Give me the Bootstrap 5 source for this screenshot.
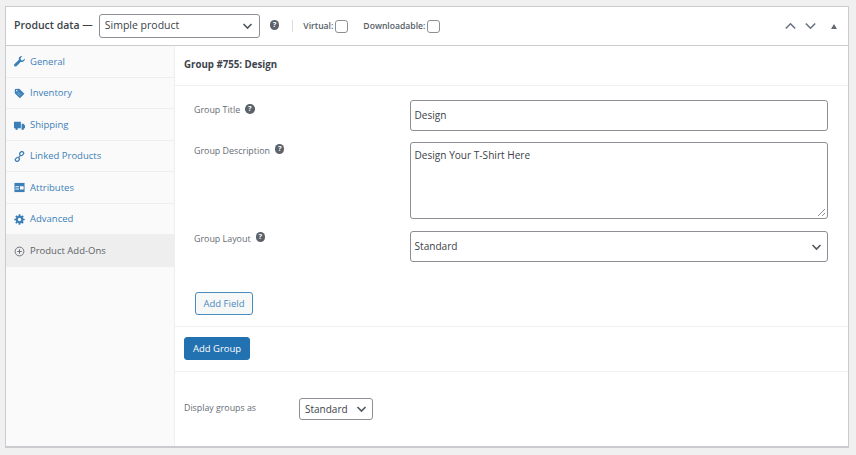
<!DOCTYPE html>
<html lang="en"><head><meta charset="utf-8"><title>Product data</title>
<link href="https://cdn.jsdelivr.net/npm/bootstrap@5.3.0/dist/css/bootstrap.min.css" rel="stylesheet">
<style>
html,body{height:100%}
body{background:#f0f0f1;font-family:"Open Sans","Noto Sans",sans-serif;font-size:10px;color:#555d66;overflow:hidden;padding:6px 7px 0 5px}
.pd-panel{background:#fff;border:1px solid #c9cbcf;border-bottom-width:2px;height:442px;display:flex;flex-direction:column}
.pd-head{height:39px;border-bottom:1px solid #c9cbcf;padding:0 11px 0 8px;flex:none}
.pd-title{font-weight:600;font-size:10.5px;color:#3c434a;white-space:nowrap}
.pd-select{border:1px solid #8c8f94;border-radius:3px;background:#fff;color:#3c434a;font-size:10.5px;position:relative;display:flex;align-items:center}
.pd-select svg{position:absolute;right:6px;top:50%;margin-top:-4px}
.sel-type{width:161px;height:24px;padding-left:5px;margin-left:6px}
.pd-help{width:9.5px;height:9.5px;flex:none;border-radius:50%;background:#5c6269;color:#fff;font-size:7.5px;font-weight:700;line-height:9.5px;text-align:center;display:inline-block}
.help-top{margin:-2px 13px 0 10px}
.pd-sep{width:1px;height:12px;background:#dcdcde;margin-right:10px}
.pd-check{width:13px;height:13px;border:1px solid #8c8f94;border-radius:3px;background:#fff;margin-left:2px;flex:none}
.pd-lbl{font-size:8.6px;font-weight:600;color:#555d66;white-space:nowrap}
.pd-lbl-2{margin-left:15px}
.pd-ctrls{gap:9px}
.pd-tri{margin-left:6px}
.pd-body{flex:1;min-height:0}
.pd-side{width:169px;background:#fafafa;border-right:1px solid #eee;flex:none}
.pd-tab{height:31.45px;border-bottom:1px solid #eee;padding:1px 0 0 8px;color:#3a7fb8;font-size:9.5px;gap:5px}
.pd-tab:first-child{height:31.9px}
.pd-tab svg{width:11px;height:11px;flex:none}
.pd-tab.is-on{background:#eee;color:#5c6269;border-bottom:0}
.pd-main{flex:1;min-width:0}
.pd-gtitle{height:40px;border-bottom:1px solid #f0f0f0;padding-left:9px;font-weight:700;font-size:9.7px;color:#3c434a}
.pd-form{padding:14px 20px 11px 19px;height:241px;border-bottom:1px solid #f0f0f0}
.pd-row{display:flex}
.pd-row-a{margin-bottom:11px}
.pd-row-b{margin-bottom:12px}
.pd-label{width:216px;flex:none;font-size:8.9px;color:#666c73;gap:5px;display:flex;align-items:flex-start;line-height:13px;padding-top:2px}
.pd-row-a .pd-label{padding-top:3px}
.pd-row-a .pd-help{margin-top:1px}
.pd-row-b .pd-label{padding-top:2px}
.pd-row-c .pd-label{padding-top:1px}
.pd-input{flex:1;height:31px;border:1px solid #8c8f94;border-radius:3px;padding:1px 3.5px 0;font-size:10.1px;color:#3c434a;display:flex;align-items:center;position:relative;background:#fff}
.pd-row-c .pd-input{padding-top:0}
.pd-area{flex:1;height:77px;border:1px solid #8c8f94;border-radius:3px;padding:5px 3.5px;font-size:10.1px;color:#3c434a;position:relative;line-height:15px}
.pd-grip{position:absolute;right:1px;bottom:1px}
.pd-input svg.chev{position:absolute;right:5px;top:50%;margin-top:-4px}
.btn-field{width:58px;height:23px;padding:0;border:1px solid #4a8bc0;border-radius:3px;background:#f6f7f7;color:#4a8bc0;font-size:9.5px;line-height:21px;margin:30px 0 0 1px;display:block}
.pd-addbar{height:45px;border-bottom:1px solid #f0f0f0;padding:0 0 2px 9px}
.btn-group-add{width:66px;height:23px;padding:0;border:1px solid #2271b1;border-radius:3px;background:#2271b1;color:#fff;font-size:9.5px;line-height:21px}
.pd-disp{padding:26px 0 0 9px;font-size:8.8px;color:#666c73}
.sel-std{width:74px;height:22px;padding-left:5px;margin-left:43px;font-size:10px}
.sel-std svg{right:5px}
</style></head><body>
<div class="pd-panel">
 <div class="pd-head d-flex align-items-center">
  <span class="pd-title">Product data —</span>
  <div class="pd-select sel-type">Simple product<svg width="11" height="8" viewBox="0 0 11 8" fill="none" stroke="#50575e" stroke-width="1.6"><path d="M1.5 2l4 4 4-4"/></svg></div>
  <span class="pd-help help-top">?</span>
  <span class="pd-sep"></span>
  <span class="pd-lbl">Virtual:</span><span class="pd-check"></span>
  <span class="pd-lbl pd-lbl-2">Downloadable:</span><span class="pd-check"></span>
  <div class="ms-auto d-flex align-items-center pd-ctrls">
   <svg width="11" height="8" viewBox="0 0 11 8" fill="none" stroke="#6a7280" stroke-width="1.6"><path d="M.8 6.500l4.700-4.700 4.700 4.700"/></svg>
   <svg width="11" height="8" viewBox="0 0 11 8" fill="none" stroke="#6a7280" stroke-width="1.6"><path d="M.8 1.500l4.700 4.700 4.700-4.700"/></svg>
   <svg class="pd-tri" width="6" height="5" viewBox="0 0 6 5" fill="#646970"><path d="M3 0l3 5H0z"/></svg>
  </div>
 </div>
 <div class="pd-body d-flex">
  <div class="pd-side">
   <div class="pd-tab d-flex align-items-center"><svg viewBox="0 0 12 12" fill="#3a7fb8"><path d="M11.600 2.800L9.500 4.900 7.600 4.400 7.100 2.500 9.200.4C7.600-.2 5.900.6 5.400 2c-.3.700-.2 1.400 0 2L.6 8.800c-.7.700-.7 1.600-.1 2.300.6.600 1.600.6 2.200 0L7.600 6.300c.7.300 1.500.3 2.200 0 1.500-.6 2.300-2.200 1.800-3.500z"/></svg>General</div>
   <div class="pd-tab d-flex align-items-center"><svg viewBox="0 0 12 12" fill="#3a7fb8"><path d="M5.800.7L11.300 6.200 6.400 11.300.8 5.800 1 1z"/><path d="M4.700 4.300l3 3M3.500 5.500l3 3" stroke="#a9c8e0" stroke-width=".7"/><circle cx="3" cy="3" r=".8" fill="#fafafa"/></svg>Inventory</div>
   <div class="pd-tab d-flex align-items-center"><svg viewBox="0 0 12 12" fill="#3a7fb8"><path d="M0 2h7.500v7H0zM8.300 4h2L12 6v3H8.300z"/><circle cx="2.800" cy="9.500" r="1.300"/><circle cx="9.500" cy="9.500" r="1.300"/></svg>Shipping</div>
   <div class="pd-tab d-flex align-items-center"><svg viewBox="0 0 12 12" fill="none" stroke="#3a7fb8" stroke-width="1.400"><rect x="6" y="1" width="4.600" height="3.600" rx="1.700" transform="rotate(-45 8.300 2.800)"/><rect x="1.400" y="7.400" width="4.600" height="3.600" rx="1.700" transform="rotate(-45 3.700 9.200)"/><path d="M4.500 7.500l3-3"/></svg>Linked Products</div>
   <div class="pd-tab d-flex align-items-center"><svg viewBox="0 0 12 12"><path fill="#3a7fb8" d="M.5 1h11v10H.5z"/><path fill="#fafafa" d="M1.500 4.500h4v1.200h-4zM1.500 7h4v1.200h-4zM6.500 4.500h4v3.700h-4z"/></svg>Attributes</div>
   <div class="pd-tab d-flex align-items-center"><svg viewBox="0 0 12 12" fill="none" stroke="#3a7fb8"><circle cx="6" cy="6" r="3.100" stroke-width="2.400"/><path stroke-width="1.800" d="M6 .3v2M6 9.700v2M.3 6h2M9.700 6h2M2 2l1.400 1.400M8.600 8.600L10 10M10 2L8.600 3.400M3.400 8.600L2 10"/></svg>Advanced</div>
   <div class="pd-tab is-on d-flex align-items-center"><svg viewBox="0 0 12 12" fill="none" stroke="#646970" stroke-width="1"><circle cx="6" cy="6" r="4.800"/><path d="M6 3.500v5M3.500 6h5"/></svg>Product Add-Ons</div>
  </div>
  <div class="pd-main">
   <div class="pd-gtitle d-flex align-items-center">Group #755: Design</div>
   <div class="pd-form">
    <div class="pd-row pd-row-a">
     <div class="pd-label">Group Title <span class="pd-help">?</span></div>
     <div class="pd-input">Design</div>
    </div>
    <div class="pd-row pd-row-b">
     <div class="pd-label">Group Description <span class="pd-help">?</span></div>
     <div class="pd-area">Design Your T-Shirt Here<svg class="pd-grip" width="9" height="9" viewBox="0 0 9 9" stroke="#8c8f94" stroke-width="1"><path d="M1 8l7-7M5 8l3-3"/></svg></div>
    </div>
    <div class="pd-row pd-row-c">
     <div class="pd-label">Group Layout <span class="pd-help">?</span></div>
     <div class="pd-input">Standard<svg class="chev" width="11" height="8" viewBox="0 0 11 8" fill="none" stroke="#50575e" stroke-width="1.600"><path d="M1.500 2l4 4 4-4"/></svg></div>
    </div>
    <button type="button" class="btn btn-field">Add Field</button>
   </div>
   <div class="pd-addbar d-flex align-items-center"><button type="button" class="btn btn-group-add">Add Group</button></div>
   <div class="pd-disp d-flex align-items-center">Display groups as<div class="pd-select sel-std">Standard<svg width="11" height="8" viewBox="0 0 11 8" fill="none" stroke="#50575e" stroke-width="1.600"><path d="M1.500 2l4 4 4-4"/></svg></div></div>
  </div>
 </div>
</div>
<script src="https://cdn.jsdelivr.net/npm/bootstrap@5.3.0/dist/js/bootstrap.bundle.min.js"></script>
</body></html>
